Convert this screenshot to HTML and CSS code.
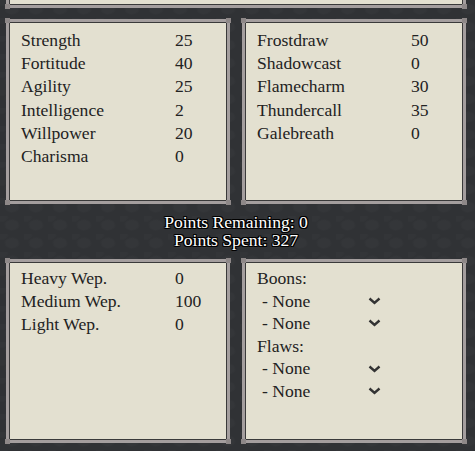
FILE: index.html
```html
<!DOCTYPE html>
<html>
<head>
<meta charset="utf-8">
<link rel="stylesheet" href="styles.css">
</head>
<body>
<div class="page">
  <div class="panel panel-top"><i class="c tl"></i><i class="c tr"></i><i class="c bl"></i><i class="c br"></i></div>

  <div class="grid">
    <div class="panel panel-a">
      <i class="c tl"></i><i class="c tr"></i><i class="c bl"></i><i class="c br"></i>
      <div class="row"><span>Strength</span><span>25</span></div>
      <div class="row"><span>Fortitude</span><span>40</span></div>
      <div class="row"><span>Agility</span><span>25</span></div>
      <div class="row"><span>Intelligence</span><span>2</span></div>
      <div class="row"><span>Willpower</span><span>20</span></div>
      <div class="row"><span>Charisma</span><span>0</span></div>
    </div>
    <div class="panel panel-a">
      <i class="c tl"></i><i class="c tr"></i><i class="c bl"></i><i class="c br"></i>
      <div class="row"><span>Frostdraw</span><span>50</span></div>
      <div class="row"><span>Shadowcast</span><span>0</span></div>
      <div class="row"><span>Flamecharm</span><span>30</span></div>
      <div class="row"><span>Thundercall</span><span>35</span></div>
      <div class="row"><span>Galebreath</span><span>0</span></div>
    </div>
  </div>

  <div class="points">
    <div>Points Remaining: 0</div>
    <div>Points Spent: 327</div>
  </div>

  <div class="grid">
    <div class="panel panel-b">
      <i class="c tl"></i><i class="c tr"></i><i class="c bl"></i><i class="c br"></i>
      <div class="row"><span>Heavy Wep.</span><span>0</span></div>
      <div class="row"><span>Medium Wep.</span><span>100</span></div>
      <div class="row"><span>Light Wep.</span><span>0</span></div>
    </div>
    <div class="panel panel-b">
      <i class="c tl"></i><i class="c tr"></i><i class="c bl"></i><i class="c br"></i>
      <div class="label">Boons:</div>
      <div class="sel"><span>- None</span><svg width="13" height="8" viewBox="0 0 13 8"><polyline points="1.5,1.5 6.5,6 11.5,1.5" fill="none" stroke="#333" stroke-width="2.4"/></svg></div>
      <div class="sel"><span>- None</span><svg width="13" height="8" viewBox="0 0 13 8"><polyline points="1.5,1.5 6.5,6 11.5,1.5" fill="none" stroke="#333" stroke-width="2.4"/></svg></div>
      <div class="label">Flaws:</div>
      <div class="sel"><span>- None</span><svg width="13" height="8" viewBox="0 0 13 8"><polyline points="1.5,1.5 6.5,6 11.5,1.5" fill="none" stroke="#333" stroke-width="2.4"/></svg></div>
      <div class="sel"><span>- None</span><svg width="13" height="8" viewBox="0 0 13 8"><polyline points="1.5,1.5 6.5,6 11.5,1.5" fill="none" stroke="#333" stroke-width="2.4"/></svg></div>
    </div>
  </div>
</div>
</body>
</html>
```

FILE: styles.css
```css
html, body {
  margin: 0;
  padding: 0;
}
body {
  background-color: #303235;
  background-image:
    radial-gradient(ellipse at 50% 50%, rgba(255,255,255,0.018) 0 6px, transparent 8px),
    radial-gradient(ellipse at 0 0, rgba(255,255,255,0.015) 0 7px, transparent 9px);
  background-size: 24px 18px;
  font-family: "Liberation Serif", "Times New Roman", serif;
  font-size: 17.6px;
  color: #222;
  height: 451px;
  overflow: hidden;
}
.page {
  padding: 0 9px 0 6px;
}
.panel {
  position: relative;
  box-sizing: border-box;
  background: #e3e0d0;
  border: 3px solid #a49e9e;
  box-shadow: inset 0 0 0 1px #3a3a3a;
}
.panel-top {
  height: 48px;
  margin-top: -40px;
}
.grid {
  display: grid;
  grid-template-columns: 1fr 1fr;
  column-gap: 12px;
}
.panel-a {
  height: 185px;
  padding: 7px 12px;
  margin-top: 11px;
}
.panel-b {
  height: 184px;
  padding: 5px 12px;
}
.row {
  display: grid;
  grid-template-columns: 154px auto;
  line-height: 23.2px;
}
.label {
  line-height: 22.6px;
}
.sel {
  display: flex;
  align-items: center;
  justify-content: space-between;
  width: 119px;
  padding-left: 5px;
  line-height: 22.6px;
}
.sel svg {
  display: block;
}
.points {
  text-align: center;
  color: #fff;
  line-height: 18px;
  padding: 9px 0 10px;
  text-shadow: -1px 0 0 #000, 1px 0 0 #000, 0 -1px 0 #000, 0 1px 0 #000,
    1px 1px 0 #000, -1px -1px 0 #000, 1px -1px 0 #000, -1px 1px 0 #000;
}
.c {
  position: absolute;
  width: 5px;
  height: 5px;
  background: #8e8888;
}
.c.tl { top: -4px; left: -4px; }
.c.tr { top: -4px; right: -4px; }
.c.bl { bottom: -4px; left: -4px; }
.c.br { bottom: -4px; right: -4px; }
```
